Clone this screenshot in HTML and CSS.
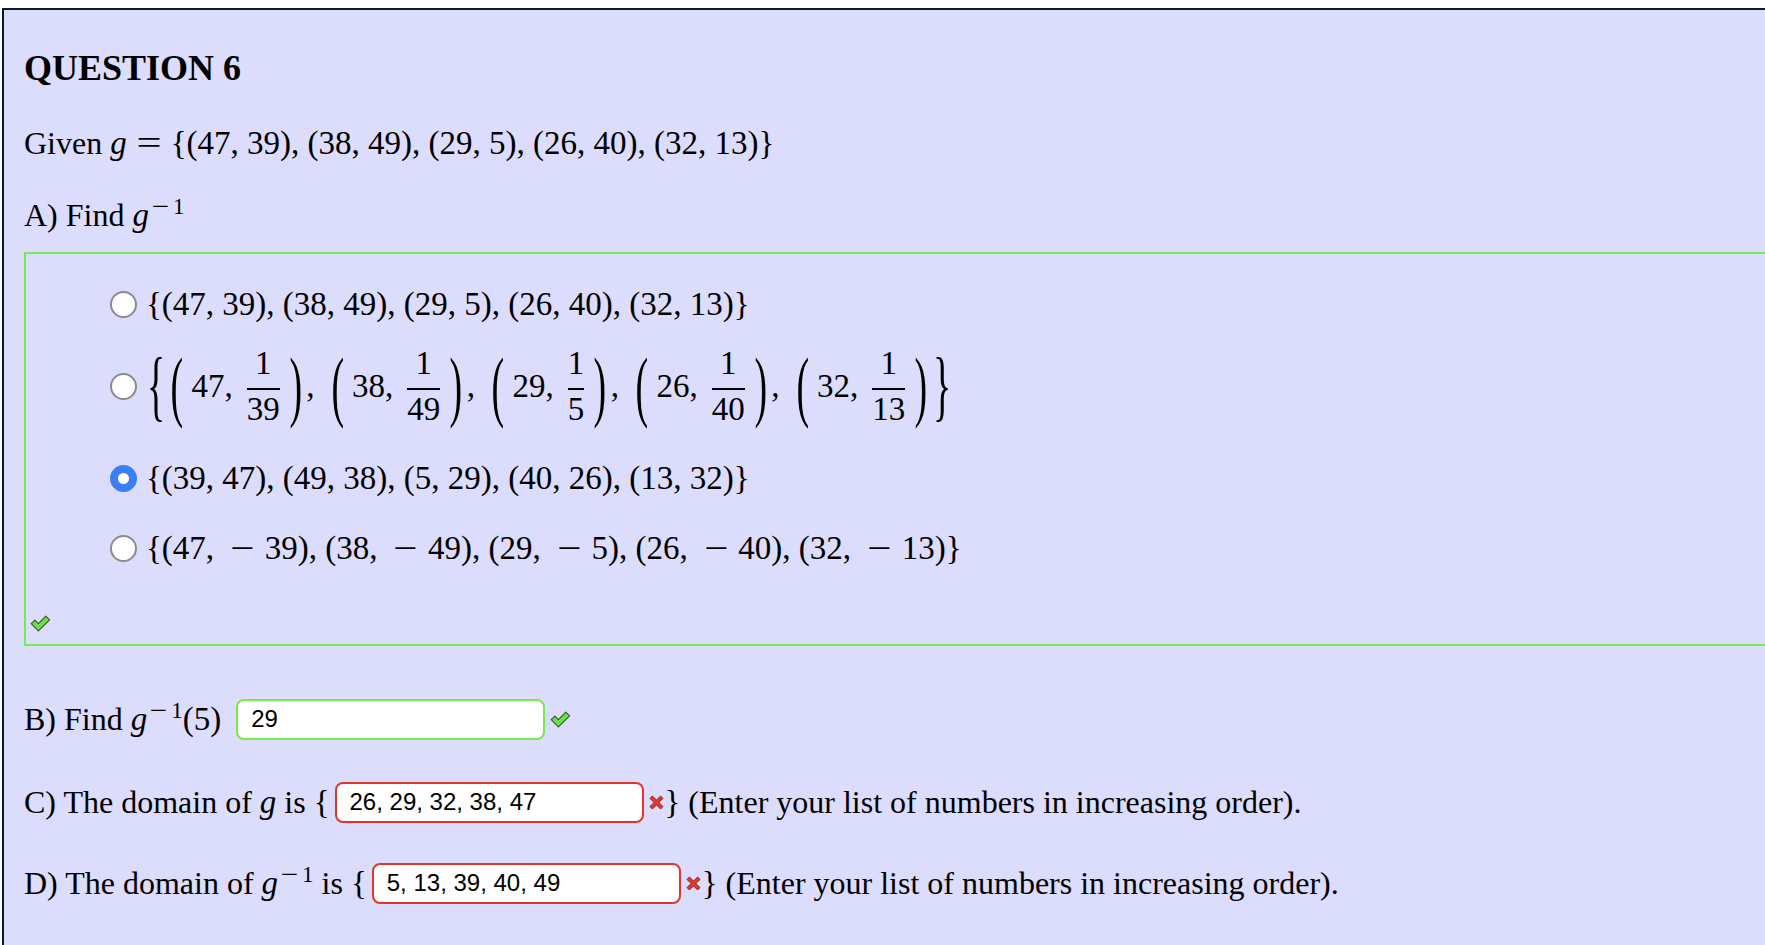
FILE: index.html
```html
<!DOCTYPE html>
<html>
<head>
<meta charset="utf-8">
<title>Question 6</title>
<link rel="stylesheet" href="styles.css">
</head>
<body>
<div class="page">
  <h3 class="qtitle">QUESTION 6</h3>
  <p class="line">Given <span class="m"><i class="v">g</i><span class="eq">=</span>{(47, 39), (38, 49), (29, 5), (26, 40), (32, 13)}</span></p>
  <p class="line l-a">A) Find <span class="m"><i class="v">g</i><span class="sup"><span class="sm">−</span><span class="one">1</span></span></span></p>

  <div class="choices">
    <label class="opt o1"><input type="radio" name="q6" class="rb"><span class="m">{(47, 39), (38, 49), (29, 5), (26, 40), (32, 13)}</span></label>
    <label class="opt o2"><input type="radio" name="q6" class="rb"><span class="m mfr"><span class="bb">{</span><span class="bp">(</span><span class="t">47,</span><span class="fr"><span class="nu">1</span><span class="de">39</span></span><span class="bp">)</span><span class="cm">,</span><span class="bp">(</span><span class="t">38,</span><span class="fr"><span class="nu">1</span><span class="de">49</span></span><span class="bp">)</span><span class="cm">,</span><span class="bp">(</span><span class="t">29,</span><span class="fr"><span class="nu">1</span><span class="de">5</span></span><span class="bp">)</span><span class="cm">,</span><span class="bp">(</span><span class="t">26,</span><span class="fr"><span class="nu">1</span><span class="de">40</span></span><span class="bp">)</span><span class="cm">,</span><span class="bp">(</span><span class="t">32,</span><span class="fr"><span class="nu">1</span><span class="de">13</span></span><span class="bp">)</span><span class="bb bb-r">}</span></span></label>
    <label class="opt o3"><input type="radio" name="q6" class="rb" checked><span class="m">{(39, 47), (49, 38), (5, 29), (40, 26), (13, 32)}</span></label>
    <label class="opt o4"><input type="radio" name="q6" class="rb"><span class="m">{(47,<span class="mn">−</span>39), (38,<span class="mn">−</span>49), (29,<span class="mn">−</span>5), (26,<span class="mn">−</span>40), (32,<span class="mn">−</span>13)}</span></label>
    <div class="mark">
      <svg class="ck" width="21" height="17" viewBox="0 0 21 17"><path d="M1.2 8.6 L4.8 5.2 L8.4 8.7 L15.8 1.2 L19.6 4.8 L8.4 15.8 Z" fill="#6fe048" stroke="#2d5c22" stroke-width="1.1" stroke-linejoin="round"/></svg>
    </div>
  </div>

  <div class="row r-b"><span class="tx">B) Find <span class="m"><i class="v">g</i><span class="sup"><span class="sm">−</span><span class="one">1</span></span>(5)</span></span><input class="ans ok" type="text" value="29"><svg class="ck ck-b" width="21" height="17" viewBox="0 0 21 17"><path d="M1.2 8.6 L4.8 5.2 L8.4 8.7 L15.8 1.2 L19.6 4.8 L8.4 15.8 Z" fill="#6fe048" stroke="#2d5c22" stroke-width="1.1" stroke-linejoin="round"/></svg></div>

  <div class="row r-c"><span class="tx">C) The domain of <span class="m"><i class="v">g</i></span> is <span class="m">{</span></span><input class="ans bad ans-s" type="text" value="26, 29, 32, 38, 47"><svg class="xx" width="15" height="15" viewBox="0 0 15 15"><path d="M1 3.4 L3.4 1 L7.5 5.1 L11.6 1 L14 3.4 L9.9 7.5 L14 11.6 L11.6 14 L7.5 9.9 L3.4 14 L1 11.6 L5.1 7.5 Z" fill="#e8392c" stroke="#7c1d14" stroke-width="0.9" stroke-linejoin="round"/></svg><span class="tx tx-end"><span class="m">}</span> (Enter your list of numbers in increasing order).</span></div>

  <div class="row r-d"><span class="tx">D) The domain of <span class="m"><i class="v">g</i><span class="sup"><span class="sm">−</span><span class="one">1</span></span></span> is <span class="m">{</span></span><input class="ans bad ans-s" type="text" value="5, 13, 39, 40, 49"><svg class="xx" width="15" height="15" viewBox="0 0 15 15"><path d="M1 3.4 L3.4 1 L7.5 5.1 L11.6 1 L14 3.4 L9.9 7.5 L14 11.6 L11.6 14 L7.5 9.9 L3.4 14 L1 11.6 L5.1 7.5 Z" fill="#e8392c" stroke="#7c1d14" stroke-width="0.9" stroke-linejoin="round"/></svg><span class="tx tx-end"><span class="m">}</span> (Enter your list of numbers in increasing order).</span></div>
</div>
</body>
</html>
```

FILE: styles.css
```css
html, body {
  margin: 0;
  padding: 0;
  overflow: hidden;
  background: #ffffff;
}

body {
  font-family: "Liberation Serif", "Times New Roman", serif;
  color: #000;
}

.page {
  margin: 8px 0 0 2px;
  width: 1900px;
  min-height: 1000px;
  box-sizing: border-box;
  background: #dcdcfc;
  border-top: 2px solid #0b1838;
  border-left: 2px solid #0b1838;
  padding: 0 0 0 20px;
  display: flex;
  flex-direction: column;
}

.qtitle {
  margin: 38px 0 0;
  font-size: 36px;
  line-height: 40px;
  font-weight: bold;
}

.line {
  margin: 35px 0 0;
  font-size: 32px;
  line-height: 40px;
  height: 40px;
  white-space: nowrap;
}

.l-a {
  margin-top: 32px;
}

.m {
  font-size: 33px;
  white-space: nowrap;
}

.v {
  font-style: italic;
}

.eq {
  display: inline-block;
  width: 26px;
  text-align: center;
  margin: 0 9px;
  transform: scaleX(1.35);
}

.sup {
  font-size: 23px;
  line-height: 0;
  vertical-align: 12px;
  margin-left: 5px;
}

.sm {
  display: inline-block;
  transform: scaleX(1.35);
}

.one {
  margin-left: 6px;
}

/* choices box */
.choices {
  margin-top: 17px;
  border: 2px solid #74ec4e;
  padding: 30px 0 11px 0;
}

.opt {
  display: flex;
  align-items: center;
  height: 40px;
  padding-left: 84px;
}

.o2 {
  margin-top: 27px;
  height: 70px;
}

.o3 {
  margin-top: 37px;
}

.o4 {
  margin-top: 30px;
}

.rb {
  -webkit-appearance: none;
  appearance: none;
  flex: none;
  width: 27px;
  height: 27px;
  margin: 0 9px 0 0;
  box-sizing: border-box;
  border-radius: 50%;
  border: 2.5px solid #8b8b8b;
  background: #fff;
}

.rb:checked {
  border: 8px solid #3b7ff5;
}

.mn {
  display: inline-block;
  margin: 0 13px 0 19px;
  transform: scaleX(1.3);
}

/* fractions row */
.mfr {
  display: inline-flex;
  align-items: center;
  height: 70px;
}

.bb,
.bp {
  display: inline-block;
  line-height: 36px;
  text-align: center;
  transform: scale(1.15, 2.35);
}

.bb {
  width: 20px;
}

.bp {
  width: 21.5px;
}

.t {
  margin: 0 12px 0 4px;
}

.cm {
  margin-right: 12px;
}

.fr {
  display: inline-flex;
  flex-direction: column;
  padding: 0 2px;
  margin: 0 3px 5px 0;
  text-align: center;
}

.nu {
  line-height: 50px;
}

.de {
  line-height: 39px;
  border-top: 2px solid #000;
}

.mark {
  margin-top: 45px;
  height: 20px;
  display: flex;
  align-items: center;
  padding-left: 4px;
}

/* answer rows */
.row {
  display: flex;
  align-items: center;
  height: 44px;
  margin-top: 39px;
  font-size: 32px;
  white-space: pre;
}

.r-b {
  margin-top: 51px;
}

.r-d {
  margin-top: 37px;
}

.tx {
  line-height: 40px;
}

.ans {
  flex: none;
  width: 309px;
  height: 41px;
  box-sizing: border-box;
  margin: 0 0 0 15px;
  padding: 0 0 0 13px;
  border: 2px solid #74ec4e;
  border-radius: 8px;
  background: #fff;
  color: #000;
  font-family: "Liberation Sans", Arial, sans-serif;
  font-size: 24px;
  outline: none;
}

.ans-s {
  margin-left: 5px;
}

.ok {
  border-color: #74ec4e;
}

.bad {
  border-color: #e3342a;
}

.ck {
  flex: none;
}

.ck-b {
  margin-left: 5px;
}

.xx {
  flex: none;
  margin-left: 5px;
}

.tx-end {
  margin-left: 1px;
}
```
